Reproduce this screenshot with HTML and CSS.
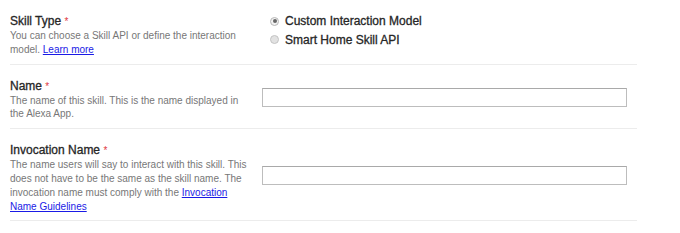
FILE: index.html
```html
<!DOCTYPE html>
<html lang="en">
<head>
    <meta charset="UTF-8">
    <title>Skill Information</title>
    <link rel="stylesheet" href="styles.css">
</head>
<body>
    <form class="skill-form">
        <div class="form-row">
            <div class="field-info">
                <div class="field-title">Skill Type <span class="required">*</span></div>
                <p class="field-help">You can choose a Skill API or define the interaction model. <a href="#">Learn more</a></p>
            </div>
            <div class="field-input field-top">
                <label class="radio-option"><input type="radio" name="skillType" checked> Custom Interaction Model</label>
                <label class="radio-option"><input type="radio" name="skillType"> Smart Home Skill API</label>
            </div>
        </div>

        <div class="form-row">
            <div class="field-info">
                <div class="field-title">Name <span class="required">*</span></div>
                <p class="field-help">The name of this skill. This is the name displayed in the Alexa App.</p>
            </div>
            <div class="field-input">
                <input type="text" class="text-input" name="name">
            </div>
        </div>

        <div class="form-row">
            <div class="field-info">
                <div class="field-title">Invocation Name <span class="required">*</span></div>
                <p class="field-help">The name users will say to interact with this skill. This does not have to be the same as the skill name. The invocation name must comply with the <a href="#">Invocation Name Guidelines</a></p>
            </div>
            <div class="field-input">
                <input type="text" class="text-input" name="invocationName">
            </div>
        </div>
    </form>
</body>
</html>
```

FILE: styles.css
```css
* {
    margin: 0;
    padding: 0;
    box-sizing: border-box;
}

body {
    font-family: "Liberation Sans", Arial, sans-serif;
    background: #fff;
    color: #333;
}

.skill-form {
    width: 627px;
    margin-left: 10px;
}

.form-row {
    display: flex;
    align-items: center;
    border-bottom: 1px solid #ececec;
}

.field-info {
    width: 240px;
    padding: 14px 0 7px;
}

.field-title {
    font-size: 12px;
    line-height: 15px;
    color: #262626;
    -webkit-text-stroke: 0.3px #262626;
}

.required {
    color: #e0383e;
    font-size: 10px;
    vertical-align: top;
    -webkit-text-stroke: 0;
}

.field-help {
    font-size: 10px;
    line-height: 13.8px;
    color: #777;
}

.field-help a {
    color: #1a1ae6;
}

.field-input {
    flex: 1;
    padding-left: 12px;
    margin-top: 2px;
}

.field-top {
    align-self: flex-start;
    padding-top: 12px;
    padding-left: 20px;
    margin-top: 0;
}

.radio-option {
    display: flex;
    align-items: center;
    font-size: 12px;
    line-height: 18.5px;
    color: #262626;
    -webkit-text-stroke: 0.3px #262626;
}

.radio-option input {
    appearance: none;
    -webkit-appearance: none;
    width: 9px;
    height: 9px;
    border-radius: 50%;
    border: 1px solid #c4c4c4;
    background: #e2e2e2;
    margin-right: 6px;
    position: relative;
}

.radio-option input:checked {
    background: #f2f2f2;
    border-color: #b8b8b8;
}

.radio-option input:checked::after {
    content: '';
    position: absolute;
    left: 1.5px;
    top: 1.5px;
    width: 4px;
    height: 4px;
    border-radius: 50%;
    background: #666;
}

.text-input {
    display: block;
    width: 365px;
    height: 19px;
    border: 1px solid #bdbdbd;
    border-top-color: #a9a9a9;
    font-family: inherit;
    font-size: 12px;
    padding: 0 4px;
    outline: none;
}
```
